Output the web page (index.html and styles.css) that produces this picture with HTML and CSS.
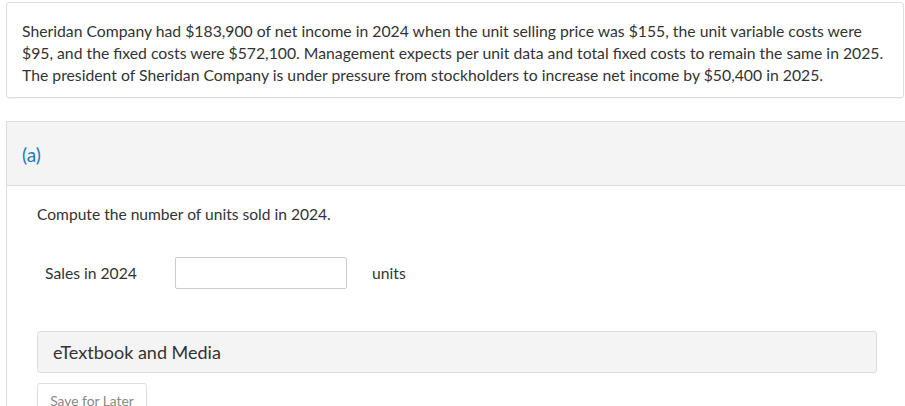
FILE: index.html
```html
<!DOCTYPE html>
<html>
<head>
<meta charset="utf-8">
<link rel="stylesheet" href="styles.css">
</head>
<body>
<div class="question">
  <p>Sheridan Company had $183,900 of net income in 2024 when the unit selling price was $155, the unit variable costs were $95, and the fixed costs were $572,100. Management expects per unit data and total fixed costs to remain the same in 2025. The president of Sheridan Company is under pressure from stockholders to increase net income by $50,400 in 2025.</p>
</div>
<div class="part">
  <div class="part-head">(a)</div>
  <div class="part-body">
    <p class="prompt">Compute the number of units sold in 2024.</p>
    <div class="row">
      <span class="label">Sales in 2024</span>
      <input class="answer" type="text">
      <span class="unit">units</span>
    </div>
    <div class="media">eTextbook and Media</div>
    <button class="save">Save for Later</button>
  </div>
</div>
</body>
</html>
```
FILE: styles.css
```css
html, body { margin: 0; padding: 0; background: #fff; }
body {
  font-family: Lato, "Liberation Sans", sans-serif;
  color: #333;
  padding: 2px 1px 0 6px;
  overflow: hidden;
  height: 406px;
  box-sizing: border-box;
}
.question {
  border: 1px solid #ddd;
  border-radius: 3px;
  padding: 17px 15px 17px 15px;
  height: 96px;
  box-sizing: border-box;
  box-shadow: 0 1px 1px rgba(0,0,0,0.04);
}
.question p {
  margin: 0;
  font-size: 15.75px;
  line-height: 22px;
}
.part {
  margin-top: 23px;
  border-left: 1px solid #ddd;
  border-top: 1px solid #ddd;
  margin-right: -1px;
}
.part-head {
  background: #f4f4f4;
  height: 64px;
  border-bottom: 1px solid #ddd;
  box-sizing: border-box;
  display: flex;
  align-items: center;
  padding-left: 15px;
  padding-top: 2px;
  font-size: 19px;
  color: #1a7bbf;
}
.part-body {
  padding: 17px 28px 0 30px;
}
.prompt {
  margin: 0;
  font-size: 15.6px;
  line-height: 22px;
}
.row {
  display: flex;
  align-items: center;
  margin-top: 32px;
  padding-left: 8px;
  font-size: 15.7px;
}
.label { width: 130px; }
.answer {
  width: 172px;
  height: 32px;
  box-sizing: border-box;
  border: 1px solid #ccc;
  border-radius: 2px;
  margin: 0;
  padding: 0 6px;
  font: inherit;
}
.unit { margin-left: 25px; }
.media {
  margin-top: 42px;
  background: #f4f4f4;
  border: 1px solid #ddd;
  border-radius: 3px;
  height: 42px;
  box-sizing: border-box;
  display: flex;
  align-items: center;
  padding-left: 15px;
  font-size: 18px;
  color: #333;
}
.save {
  margin-top: 10px;
  background: #fff;
  border: 1px solid #ddd;
  border-radius: 3px;
  font-family: inherit;
  font-size: 13.8px;
  color: #888;
  width: 110px;
  height: 34px;
  padding: 0;
  display: block;
  text-align: center;
}
```
